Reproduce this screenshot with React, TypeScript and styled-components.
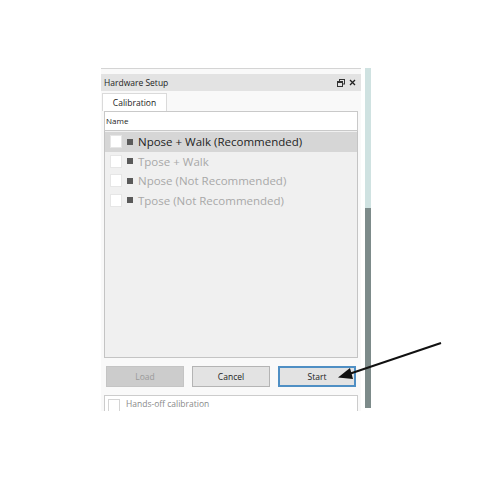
import styled, { createGlobalStyle } from 'styled-components';

const GlobalStyle = createGlobalStyle`
  html, body {
    margin: 0;
    padding: 0;
    background: #ffffff;
  }
  body {
    font-family: "Open Sans", "Noto Sans", "Liberation Sans", sans-serif;
  }
`;

type poseType = {
  name: string;
  active: boolean;
};

const poses: poseType[] = [
  { name: 'Npose + Walk (Recommended)', active: true },
  { name: 'Tpose + Walk', active: false },
  { name: 'Npose (Not Recommended)', active: false },
  { name: 'Tpose (Not Recommended)', active: false },
];

export default function App() {
  return (
    <>
      <GlobalStyle />
      <SPage>
        <SFrame>
          <SPanel>
            <STitleBar>
              <span>Hardware Setup</span>
              <STitleIcons>
                <svg width="8" height="8" viewBox="0 0 8 8">
                  <rect x="2.5" y="0.5" width="5" height="4.5" fill="none" stroke="#333" strokeWidth="1" />
                  <rect x="0.5" y="2.5" width="5" height="5" fill="#e3e3e3" stroke="#333" strokeWidth="1" />
                  <rect x="0.5" y="2.5" width="5" height="1.5" fill="#333" />
                </svg>
                <svg width="7" height="7" viewBox="0 0 7 7">
                  <path d="M1 1 L6 6 M6 1 L1 6" stroke="#222" strokeWidth="1.3" />
                </svg>
              </STitleIcons>
            </STitleBar>
            <SBody>
              <STab>Calibration</STab>
              <SHeader>Name</SHeader>
              <SList>
                {poses.map(pose => (
                  <SRow key={pose.name} $active={pose.active}>
                    <SCheck />
                    <SMarker />
                    <SLabel $active={pose.active}>{pose.name}</SLabel>
                  </SRow>
                ))}
              </SList>
              <SButtons>
                <SButton $kind="disabled">Load</SButton>
                <SButton $kind="normal">Cancel</SButton>
                <SButton $kind="focus">Start</SButton>
              </SButtons>
              <SOption>
                <SOptionCheck />
                <span>Hands-off calibration</span>
              </SOption>
            </SBody>
          </SPanel>
          <SStrip />
        </SFrame>
        <SArrow width="478" height="497" viewBox="0 0 478 497">
          <line x1="441" y1="343" x2="349" y2="374" stroke="#111" strokeWidth="2" />
          <path d="M338 377.5 L350 368 L353 379 Z" fill="#111" />
        </SArrow>
      </SPage>
    </>
  );
}

const SPage = styled.div`
  position: relative;
  width: 478px;
  height: 497px;
  padding: 68px 0 0 101px;
  box-sizing: border-box;
  overflow: hidden;
`;

const SFrame = styled.div`
  display: flex;
  align-items: flex-start;
`;

const SPanel = styled.div`
  width: 260px;
  height: 343px;
  box-sizing: border-box;
  border-top: 1px solid #d4d4d4;
  background: #f9f9f9;
  padding-top: 5px;
  overflow: hidden;
  display: flex;
  flex-direction: column;
`;

const STitleBar = styled.div`
  height: 17px;
  background: #e3e3e3;
  display: flex;
  align-items: center;
  justify-content: space-between;
  padding: 0 5px 0 3px;
  font-size: 8.5px;
  color: #222;
  flex-shrink: 0;
`;

const STitleIcons = styled.div`
  display: flex;
  align-items: center;
  gap: 4px;
`;

const SBody = styled.div`
  padding: 2px 3px 0 3px;
  display: flex;
  flex-direction: column;
`;

const STab = styled.div`
  align-self: flex-start;
  margin-left: -2px;
  width: 65px;
  height: 18px;
  box-sizing: border-box;
  background: #ffffff;
  border: 1px solid #dadada;
  border-bottom: none;
  font-size: 8.5px;
  color: #222;
  display: flex;
  align-items: center;
  justify-content: center;
`;

const SHeader = styled.div`
  height: 20px;
  box-sizing: border-box;
  background: #ffffff;
  border: 1px solid #c9c9c9;
  font-size: 8px;
  color: #222;
  padding: 3px 0 0 1px;
`;

const SList = styled.div`
  height: 227px;
  box-sizing: border-box;
  background: #f0f0f0;
  border: 1px solid #c4c4c4;
  border-top: none;
  padding-top: 1px;
`;

const SRow = styled.div<{ $active: boolean }>`
  height: 19.5px;
  display: flex;
  align-items: center;
  padding-left: 5px;
  background: ${p => (p.$active ? '#d6d6d6' : 'transparent')};
`;

const SCheck = styled.div`
  width: 12px;
  height: 13px;
  background: #ffffff;
  border: 1px solid #e6e6e6;
  box-sizing: border-box;
`;

const SMarker = styled.div`
  width: 6px;
  height: 6px;
  background: #5a5a5a;
  margin: 0 5px 0 5px;
`;

const SLabel = styled.span<{ $active: boolean }>`
  font-size: 11.5px;
  color: ${p => (p.$active ? '#1e1e1e' : '#a8a8a8')};
`;

const SButtons = styled.div`
  display: flex;
  gap: 8px;
  padding-left: 2px;
  margin-top: 8px;
`;

const SButton = styled.div<{ $kind: 'disabled' | 'normal' | 'focus' }>`
  width: 78px;
  height: 21px;
  box-sizing: border-box;
  display: flex;
  align-items: center;
  justify-content: center;
  font-size: 8.5px;
  color: ${p => (p.$kind === 'disabled' ? '#9a9a9a' : '#222')};
  background: ${p => (p.$kind === 'disabled' ? '#cccccc' : '#e3e3e3')};
  border: ${p =>
    p.$kind === 'focus' ? '2px solid #4f8fc4' : p.$kind === 'normal' ? '1px solid #b4b4b4' : '1px solid #c4c4c4'};
`;

const SOption = styled.div`
  margin-top: 8px;
  height: 30px;
  box-sizing: border-box;
  background: #ffffff;
  border: 1px solid #cccccc;
  display: flex;
  align-items: flex-start;
  padding: 2px 0 0 3px;
  gap: 6px;
  font-size: 8.5px;
  color: #8a8a8a;
`;

const SOptionCheck = styled.div`
  width: 12px;
  height: 14px;
  box-sizing: border-box;
  border: 1px solid #d4d4d4;
  background: #ffffff;
  margin-top: 1px;
`;

const SStrip = styled.div`
  width: 6px;
  height: 340px;
  margin-left: 4px;
  background: linear-gradient(to bottom, #cfe2e1 0, #cfe2e1 140px, #7d8b8a 140px, #7d8b8a 100%);
`;

const SArrow = styled.svg`
  position: absolute;
  left: 0;
  top: 0;
  pointer-events: none;
`;
